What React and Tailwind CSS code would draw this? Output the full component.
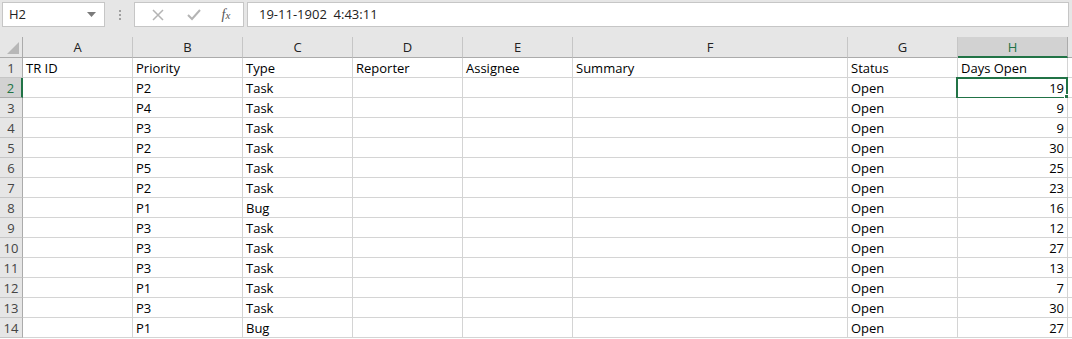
import React from "react";

const rows = [
  ["P2", "Task", 19],
  ["P4", "Task", 9],
  ["P3", "Task", 9],
  ["P2", "Task", 30],
  ["P5", "Task", 25],
  ["P2", "Task", 23],
  ["P1", "Bug", 16],
  ["P3", "Task", 12],
  ["P3", "Task", 27],
  ["P3", "Task", 13],
  ["P1", "Task", 7],
  ["P3", "Task", 30],
  ["P1", "Bug", 27],
];

const cols = ["A", "B", "C", "D", "E", "F", "G", "H"];
const gridCls =
  "grid grid-cols-[23px_110px_110px_110px_110px_110px_275px_110px_110px_4px]";

function Cell({ children, right, className = "" }) {
  return (
    <div
      className={
        "relative h-[20px] border-r border-b border-[#d4d4d4] bg-white px-[3px] pt-[1px] leading-[19px] whitespace-nowrap overflow-visible " +
        (right ? "text-right " : "") +
        className
      }
    >
      {children}
    </div>
  );
}

function RowHead({ n, sel }) {
  return (
    <div
      className={
        "h-[20px] border-b leading-[20px] text-center text-[13px] " +
        (sel
          ? "bg-[#d2d2d2] text-[#217346] border-b-[#ababab] border-r-2 border-r-[#217346]"
          : "bg-[#e6e6e6] text-[#444] border-[#c6c6c6] border-r border-r-[#ababab]")
      }
    >
      {n}
    </div>
  );
}

export default function App() {
  return (
    <div
      className="w-[1072px] h-[339px] overflow-hidden bg-white text-[13px] text-black"
      style={{ fontFamily: '"Open Sans", "Noto Sans", sans-serif' }}
    >
      {/* formula bar */}
      <div className="h-[37px] bg-[#e6e6e6] flex items-start pt-[2px] pl-[2px] pr-[3px]">
        <div className="w-[103px] h-[25px] bg-white border border-[#c6c6c6] flex items-center justify-between pl-[6px] pr-[8px]">
          <span className="text-[13px] text-[#222]">H2</span>
          <svg width="9" height="5" viewBox="0 0 9 5">
            <path d="M0 0 L9 0 L4.5 5 Z" fill="#7a7a7a" />
          </svg>
        </div>
        <div className="w-[29px] h-[25px] flex flex-col items-center justify-center gap-[2px]">
          <div className="w-[2px] h-[2px] bg-[#a0a0a0]" />
          <div className="w-[2px] h-[2px] bg-[#a0a0a0]" />
          <div className="w-[2px] h-[2px] bg-[#a0a0a0]" />
        </div>
        <div className="w-[110px] h-[25px] bg-white border border-[#c6c6c6] flex items-center">
          <div className="w-[36px] flex justify-center pl-[10px]">
            <svg width="12" height="12" viewBox="0 0 12 12">
              <path d="M1 1 L11 11 M11 1 L1 11" stroke="#b4b4b4" strokeWidth="1.5" />
            </svg>
          </div>
          <div className="w-[40px] flex justify-center pl-[6px]">
            <svg width="14" height="12" viewBox="0 0 14 12">
              <path d="M1 6 L5 10 L13 1" stroke="#b4b4b4" strokeWidth="2" fill="none" />
            </svg>
          </div>
          <div className="flex-1 flex justify-center pr-[2px]">
            <span
              className="italic text-[14px] text-[#555] leading-none"
              style={{ fontFamily: '"Liberation Serif", "DejaVu Serif", serif' }}
            >
              f<span className="text-[11px]">x</span>
            </span>
          </div>
        </div>
        <div className="w-[3px]" />
        <div className="flex-1 h-[25px] bg-white border border-[#c6c6c6] flex items-center pl-[11px] text-[13px] text-[#222]">
          19-11-1902&nbsp;&nbsp;4:43:11
        </div>
      </div>

      {/* column headers */}
      <div className={gridCls + " h-[21px] bg-[#e6e6e6]"}>
        <div className="relative h-[21px] border-r border-b border-[#ababab] bg-[#e6e6e6]">
          <svg className="absolute left-[7px] top-[5px]" width="12" height="12" viewBox="0 0 12 12">
            <path d="M12 0 L12 12 L0 12 Z" fill="#b7b7b7" />
          </svg>
        </div>
        {cols.map((c) =>
          c === "H" ? (
            <div
              key={c}
              className="h-[21px] bg-[#d2d2d2] border-r border-[#ababab] border-b-2 border-b-[#217346] text-center leading-[20px] text-[#217346] text-[13px]"
            >
              {c}
            </div>
          ) : (
            <div
              key={c}
              className="h-[21px] border-r border-[#c6c6c6] border-b border-b-[#ababab] text-center leading-[20px] text-[#222] text-[13px]"
            >
              {c}
            </div>
          )
        )}
        <div className="h-[21px] border-b border-[#ababab] bg-[#e6e6e6]" />
      </div>

      {/* row 1 */}
      <div className={gridCls}>
        <RowHead n={1} />
        <Cell>TR ID</Cell>
        <Cell>Priority</Cell>
        <Cell>Type</Cell>
        <Cell>Reporter</Cell>
        <Cell>Assignee</Cell>
        <Cell>Summary</Cell>
        <Cell>Status</Cell>
        <Cell>Days Open</Cell>
        <Cell className="border-r-0" />
      </div>

      {rows.map((r, i) => (
        <div key={i} className={gridCls}>
          <RowHead n={i + 2} sel={i === 0} />
          <Cell />
          <Cell>{r[0]}</Cell>
          <Cell>{r[1]}</Cell>
          <Cell />
          <Cell />
          <Cell />
          <Cell>Open</Cell>
          <Cell right>
            {r[2]}
            {i === 0 && (
              <>
                <div className="absolute -left-[2px] -top-[1px] w-[112px] h-[22px] border-2 border-[#217346] pointer-events-none" />
                <div className="absolute -right-[3px] -bottom-[3px] w-[6px] h-[6px] bg-[#217346] border border-white" />
              </>
            )}
          </Cell>
          <Cell className="border-r-0" />
        </div>
      ))}
    </div>
  );
}
